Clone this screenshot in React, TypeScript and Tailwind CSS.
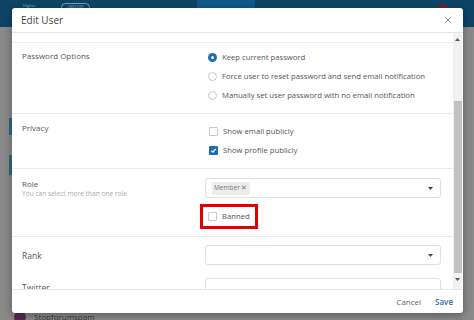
import { X } from 'lucide-react';

function Radio({ checked, label }: { checked?: boolean; label: string }) {
  return (
    <div className="flex items-center gap-[5px] h-[19px]">
      {checked ? (
        <span className="w-[9px] h-[9px] rounded-full bg-[#1f6fb0] flex items-center justify-center">
          <span className="w-[3px] h-[3px] rounded-full bg-white" />
        </span>
      ) : (
        <span className="w-[9px] h-[9px] rounded-full border border-[#c8c8c8] bg-white" />
      )}
      <span className="text-[7.7px]">{label}</span>
    </div>
  );
}

function Check({ checked, label }: { checked?: boolean; label: string }) {
  return (
    <div className="flex items-center gap-[5px] h-[19px]">
      {checked ? (
        <span className="w-[9px] h-[9px] rounded-[1px] bg-[#1f6fb0] flex items-center justify-center">
          <svg width="7" height="7" viewBox="0 0 10 10">
            <path d="M2 5.2 L4.2 7.4 L8.2 2.8" stroke="white" strokeWidth="1.8" fill="none" />
          </svg>
        </span>
      ) : (
        <span className="w-[9px] h-[9px] rounded-[1px] border border-[#c8c8c8] bg-white" />
      )}
      <span className="text-[7.7px]">{label}</span>
    </div>
  );
}

function Caret() {
  return (
    <svg width="5" height="3" viewBox="0 0 5 3">
      <path d="M0 0 L5 0 L2.5 3 Z" fill="#444" />
    </svg>
  );
}

export default function App() {
  return (
    <div className="relative w-[474px] h-[320px] overflow-hidden bg-[#898989] text-[#555] font-['Open_Sans',sans-serif]">
      {/* background page, dimmed */}
      <div className="h-[27px] bg-[#0d4466] flex items-start">
        <div className="w-[197px] pl-[23px] pt-[4px] flex items-start gap-[26px]">
          <span className="text-[4px] text-[#9fb7c7] leading-none">Higher</span>
          <span className="mt-[-1px] px-[5px] h-[9px] rounded-full border border-[#7fa0b6] text-[3px] text-[#9fb7c7] flex items-center">UNITE STEP</span>
        </div>
        <div className="w-[58px] h-[27px] bg-[#11598c]" />
        <div className="flex-1 flex justify-end pr-[26px] pt-[4px]">
          <span className="w-[10px] h-[10px] rounded-full bg-[#7a1f35]" />
        </div>
      </div>
      <div className="flex">
        <div className="w-[12px] pt-[91px] flex flex-col gap-[20px]">
          <div className="h-[17px] w-[3px] ml-[9px] bg-[#2f6a80]" />
          <div className="h-[20px] w-[3px] ml-[9px] bg-[#2f6a80]" />
        </div>
      </div>
      <div className="absolute left-[14px] top-[311px] flex items-center gap-[8px]">
        <span className="w-[12px] h-[12px] rounded-full bg-[#5a2a5a]" />
        <span className="text-[8px] leading-[10px] text-[#3a3a3a]">Stopforumspam</span>
      </div>

      {/* modal */}
      <div className="absolute left-[12px] top-[8px] w-[451px] h-[305px] bg-white rounded-[3px] shadow-[0_2px_8px_rgba(0,0,0,0.35)] flex flex-col">
        <div className="h-[25px] border-b border-[#e6e6e6] flex items-center justify-between pl-[9px] pr-[10px] shrink-0">
          <span className="text-[10px] text-[#444]">Edit User</span>
          <X size={10} strokeWidth={1.6} className="text-[#555]" />
        </div>

        <div className="flex-1 flex overflow-hidden">
          <div className="flex-1 overflow-hidden text-[8px] leading-none">
            <div className="h-[10px] border-b border-[#f0f0f0]" />
            <div className="flex border-b border-[#ececec] pt-[5px] pb-[8px]">
              <div className="w-[193px] pl-[10px] pt-[4px] text-[#555]">Password Options</div>
              <div className="flex flex-col ml-[3px]">
                <Radio checked label="Keep current password" />
                <Radio label="Force user to reset password and send email notification" />
                <Radio label="Manually set user password with no email notification" />
              </div>
            </div>
            <div className="flex border-b border-[#ececec] pt-[8px] pb-[8px]">
              <div className="w-[197px] pl-[10px] pt-[2px]">Privacy</div>
              <div className="flex flex-col">
                <Check label="Show email publicly" />
                <Check checked label="Show profile publicly" />
              </div>
            </div>
            <div className="flex border-b border-[#ececec] pt-[9px] pb-[7px]">
              <div className="w-[193px] pl-[10px] pt-[2px]">
                <div>Role</div>
                <div className="text-[6.6px] text-[#aaa] mt-[3px]">You can select more than one role</div>
              </div>
              <div className="w-[236px] flex flex-col">
                <div className="h-[20px] border border-[#e0e0e0] rounded-[3px] flex items-center justify-between pl-[6px] pr-[7px]">
                  <span className="bg-[#ececec] rounded-[2px] px-[2px] h-[13px] flex items-center text-[6.5px] text-[#777]">Member ✕</span>
                  <Caret />
                </div>
                <div className="mt-[6px] ml-[-5px] w-[58px] h-[25px] border-[3px] border-[#e00000] flex items-center pl-[5px]">
                  <Check label="Banned" />
                </div>
              </div>
            </div>
            <div className="flex items-center pt-[8px] pb-[13px]">
              <div className="w-[193px] pl-[10px] pt-[2px] text-[8.5px]">Rank</div>
              <div className="w-[236px] h-[20px] border border-[#e0e0e0] rounded-[3px] flex items-center justify-end pr-[7px]">
                <Caret />
              </div>
            </div>
            <div className="flex items-start">
              <div className="w-[193px] pl-[10px] pt-[6px] text-[8.5px]">Twitter</div>
              <div className="w-[236px] h-[20px] border border-[#e0e0e0] rounded-[3px]" />
            </div>
          </div>
          <div className="w-[9px] mr-[1px] bg-[#f1f1f1] flex flex-col items-center">
            <svg width="5" height="3" viewBox="0 0 5 3" className="mt-[5px]">
              <path d="M0 3 L5 3 L2.5 0 Z" fill="#555" />
            </svg>
            <div className="w-[8px] h-[172px] bg-[#c1c1c1] mt-[60px]" />
            <svg width="5" height="3" viewBox="0 0 5 3" className="mt-[5px]">
              <path d="M0 0 L5 0 L2.5 3 Z" fill="#555" />
            </svg>
          </div>
        </div>

        <div className="h-[24px] border-t border-[#e6e6e6] flex items-center justify-end gap-[14px] pr-[10px] text-[8px] shrink-0">
          <span className="text-[#666]">Cancel</span>
          <span className="text-[#1f6fb0] font-semibold">Save</span>
        </div>
      </div>
    </div>
  );
}
